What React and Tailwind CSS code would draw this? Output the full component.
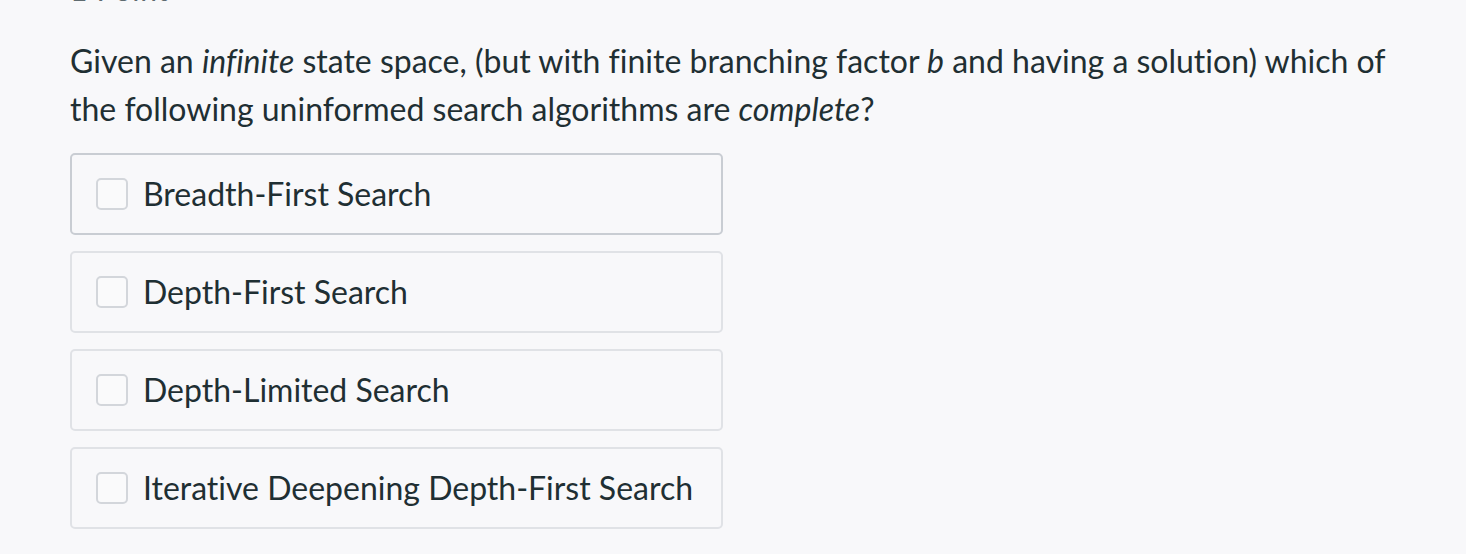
const options = [
  'Breadth-First Search',
  'Depth-First Search',
  'Depth-Limited Search',
  'Iterative Deepening Depth-First Search',
];

const Option = ({ label, active }) => (
  <label
    className={`flex h-[82px] w-[653px] items-center rounded-[5px] border-2 bg-[#f8f8fa] pl-[24px] ${
      active ? 'border-[#c9cdd3]' : 'border-[#e0e2e6]'
    }`}
  >
    <span className="h-[32px] w-[32px] flex-shrink-0 rounded-[5px] border-2 border-[#d3d6db] bg-[#fafafb]" />
    <span className="ml-[15px] text-[32px] text-[#1f2f33]">{label}</span>
  </label>
);

export default function App() {
  return (
    <div
      className="h-[554px] w-[1466px] overflow-hidden bg-[#f8f8fa] pl-[70px] [font-variant-ligatures:none]"
      style={{ fontFamily: 'Lato, "Noto Sans", sans-serif' }}
    >
      <div className="-mt-[27px] text-[30px] leading-[32px] tracking-wide text-[#5f6b70]">1 Point</div>
      <p className="mt-[32px] w-[1340px] text-[32px] leading-[48px] text-[#1f2f33]">
        Given an <em>infinite</em> state space, (but with finite branching factor <em>b</em> and having a
        solution) which of the following uninformed search algorithms are <em>complete</em>?
      </p>
      <div className="mt-[20px] flex flex-col gap-[16px]">
        {options.map((o, i) => (
          <Option key={o} label={o} active={i === 0} />
        ))}
      </div>
    </div>
  );
}
